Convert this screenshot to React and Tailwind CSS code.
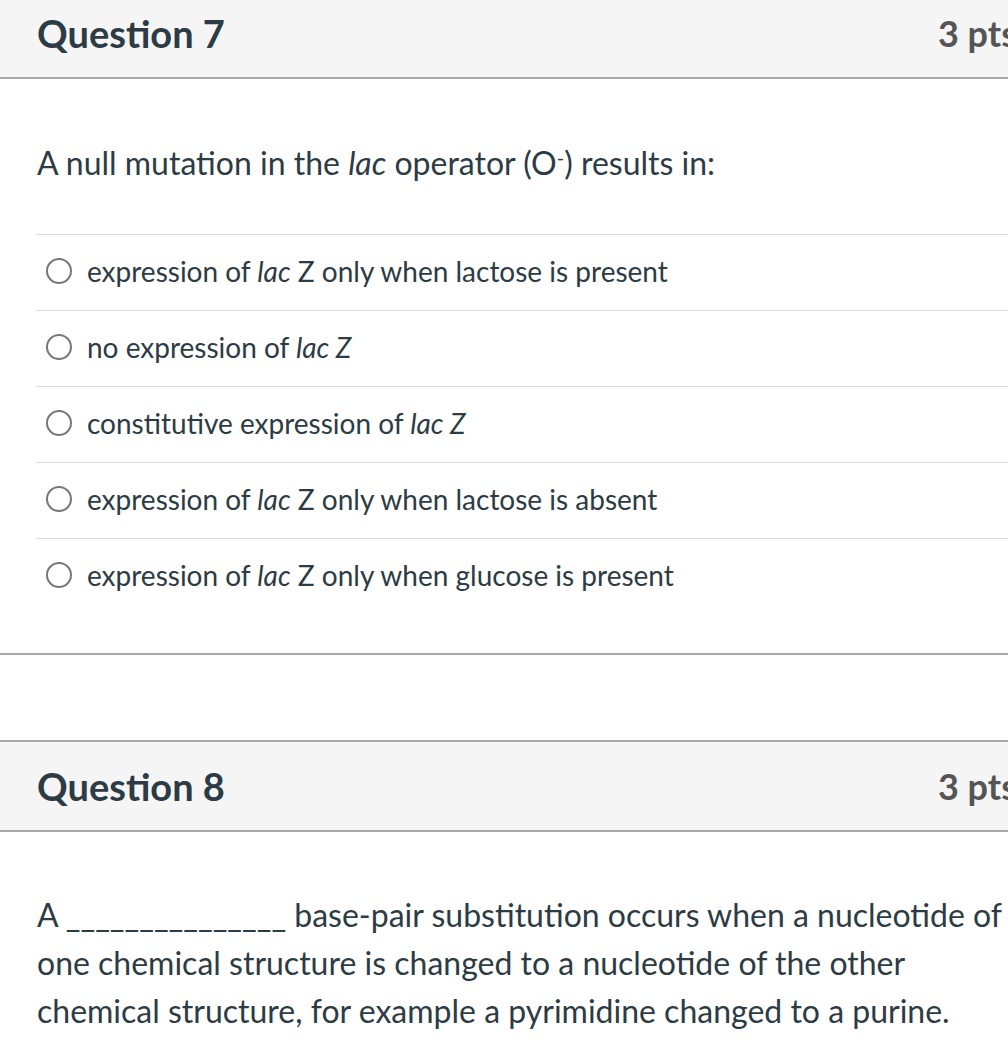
import React from "react";

const answers = [
  [<>expression of <i>lac</i> Z only when lactose is present</>],
  [<>no expression of <i>lac Z</i></>],
  [<>constitutive expression of <i>lac Z</i></>],
  [<>expression of <i>lac</i> Z only when lactose is absent</>],
  [<>expression of <i>lac</i> Z only when glucose is present</>],
];

function Header({ title }) {
  return (
    <div className="h-[88px] bg-[#f5f5f5] flex items-center justify-between pl-[37px] pr-[43px]">
      <h2 className="text-[38px] font-bold text-[#2d3b45] leading-none">{title}</h2>
      <div className="text-[36px] font-bold text-[#555555] leading-none">3 pts</div>
    </div>
  );
}

export default function App() {
  return (
    <div
      className="w-[1008px] h-[1058px] overflow-hidden bg-white"
      style={{ fontFamily: "Lato, 'Liberation Sans', sans-serif" }}
    >
      <div className="w-[1060px] -mt-[11px] text-[#2d3b45]">
        <section className="border-b-2 border-[#a8a8a8]">
          <div className="border-b-2 border-[#a8a8a8]">
            <Header title="Question 7" />
          </div>
          <div className="pt-[60px] pb-[39px]">
            <p className="pl-[37px] text-[32px] leading-[48px]">
              A null mutation in the <i>lac</i> operator (O
              <span className="relative -top-[10px] text-[20px]">-</span>) results in:
            </p>
            <div className="mt-[43px] ml-[36px]">
              {answers.map((a, i) => (
                <div
                  key={i}
                  className="h-[76px] border-t border-[#dcdcdc] flex items-center pl-[10px] pb-[4px]"
                >
                  <span className="w-[26px] h-[26px] rounded-full border-2 border-[#777777] mr-[15px] shrink-0"></span>
                  <span className="text-[28px] leading-none">{a}</span>
                </div>
              ))}
            </div>
          </div>
        </section>

        <div className="h-[85px]"></div>

        <section className="border-t-2 border-[#a8a8a8]">
          <div className="border-b-2 border-[#a8a8a8]">
            <Header title="Question 8" />
          </div>
          <div className="pt-[59px] pl-[37px] pr-[50px]">
            <p className="text-[32px] leading-[48px]">
              A _______________ base-pair substitution occurs when a nucleotide of one chemical
              structure is changed to a nucleotide of the other chemical structure, for example
              a pyrimidine changed to a purine.
            </p>
          </div>
        </section>
      </div>
    </div>
  );
}
